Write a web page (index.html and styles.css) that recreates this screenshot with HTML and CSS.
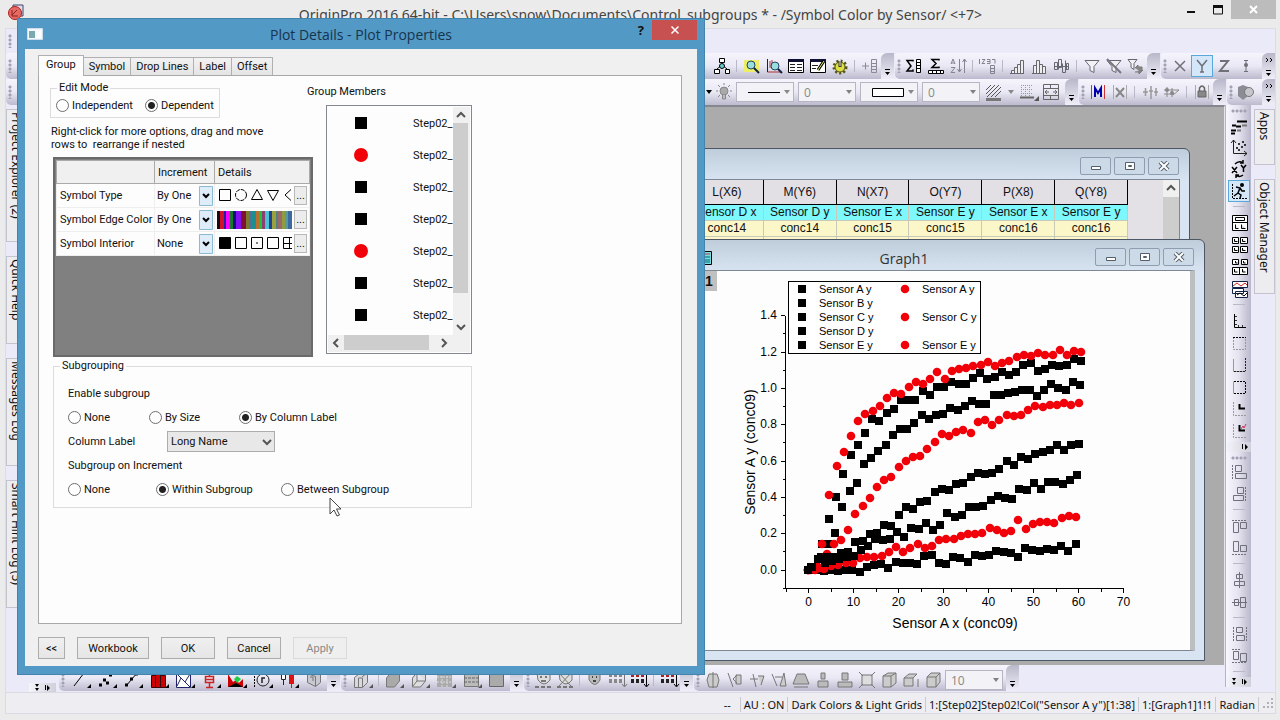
FILE: index.html
```html
<!DOCTYPE html>
<html lang="en">
<head>
    <meta charset="UTF-8">
    <meta name="viewport" content="width=device-width, initial-scale=1.0">
    <title>OriginPro 2016 64-bit</title>
    <link rel="stylesheet" href="styles.css">
</head>
<body>
    <div class="app">
        <header class="app-title">
            <svg class="app-icon" width="18" height="18" viewBox="0 0 18 18"><path d="M6 1h10v11H6z" fill="#dde" stroke="#446"/><circle cx="8" cy="9" r="6.500" fill="#e66a62" stroke="#a22"/><path d="M5 6v6h6M5 11l5-5" fill="none" stroke="#822"/></svg>
            <h1>OriginPro 2016 64-bit - C:\Users\snow\Documents\Control_subgroups * - /Symbol Color by Sensor/ &lt;+7&gt;</h1>
            <div class="app-buttons">
                <button aria-label="Minimize"><svg width="12" height="12"><path d="M2 8h8" stroke="#111" stroke-width="2"/></svg></button>
                <button aria-label="Maximize"><svg width="12" height="12"><path d="M1.500 2v8h9V2" fill="none" stroke="#111"/><path d="M1 2.500h10" stroke="#111" stroke-width="3"/></svg></button>
                <button class="app-close" aria-label="Close"><svg width="10" height="10"><path d="M1 1l7 7M8 1L1 8" stroke="#fff" stroke-width="2"/></svg></button>
            </div>
        </header>

        <div class="app-body">
            <div class="menu-row"><i class="grip"></i></div>

            <div class="tool-row">
                <div class="bar bar-fill">
                    <i class="grip"></i>
                    <span class="fill"></span>
                    <button class="tool" aria-label="Project"><svg viewBox="0 0 22 22"><path d="M8.500 3.500h5v4h-5zM3.500 14.500h5v4h-5zM14.500 14.500h4v4h-4zM11 8v3M6 14l5-4 5 4" fill="#fff" stroke="#000"/><circle cx="11" cy="11" r="2.500" fill="#6cc" stroke="#000"/></svg></button>
                    <i class="sep"></i>
                    <button class="tool" aria-label="Zoom window"><svg viewBox="0 0 22 22"><path d="M3 5h15v12H3z" fill="#ee6"/><circle cx="10" cy="10" r="4" fill="#9dd" stroke="#246"/><path d="M13 13l5 5" stroke="#124" stroke-width="2"/></svg></button>
                    <button class="tool" aria-label="Zoom graph"><svg viewBox="0 0 22 22"><path d="M4.500 4v13H18M7 13V6M9 5v4" fill="none" stroke="#a33"/><path d="M4.500 4v13" stroke="#222"/><circle cx="12" cy="11" r="4" fill="#9dd" stroke="#246"/><path d="M15 14l4 4" stroke="#124" stroke-width="2"/></svg></button>
                    <button class="tool" aria-label="Results log"><svg viewBox="0 0 22 22"><path d="M3.500 4.500h15v13h-15z" fill="#fff" stroke="#000"/><path d="M3 5.500h16" stroke="#113" stroke-width="3"/><path d="M5 9.500h5M12 9.500h5M5 12.500h5M12 12.500h5M5 15.500h5M12 15.500h5" stroke="#222"/></svg></button>
                    <button class="tool" aria-label="Command window"><svg viewBox="0 0 22 22"><path d="M3.500 4.500h15v13h-15z" fill="#fff" stroke="#000"/><path d="M3 5.500h16" stroke="#113" stroke-width="3"/><path d="M5 10.500h6M5 13.500h4" stroke="#222"/><path d="M17 6l-6 9" stroke="#000" stroke-width="3"/><path d="M17 6l-6 9" stroke="#ee6"/></svg></button>
                    <button class="tool" aria-label="Code builder"><svg viewBox="0 0 22 22"><circle cx="11" cy="12" r="6" fill="#dd4" stroke="#552" stroke-width="3" stroke-dasharray="2 2"/><circle cx="11" cy="12" r="5" fill="#dd4" stroke="#552"/><path d="M11 6v6" stroke="#333" stroke-width="3"/><path d="M11 5v6" stroke="#eee"/></svg></button>
                    <i class="sep"></i>
                    <button class="tool" aria-label="Add column"><svg viewBox="0 0 22 22"><path d="M3 11h7M6.500 7.500v7M12.500 4.500h5v13h-5zM12 8.500h6M12 11.500h6M12 14.500h6" fill="none" stroke="#8a8a94"/></svg></button>
                    <span class="more"></span>
                </div>
                <div class="bar">
                    <i class="grip"></i>
                    <button class="tool" aria-label="Column statistics"><svg viewBox="0 0 22 22"><path d="M10 6.500V5.500H4l4 5.500-4 5h6v-1.500" fill="none" stroke="#000" stroke-width="1.500"/><path d="M13.500 4.500h4v13h-4zM13 7.500h5M13 10.500h5M13 13.500h5" fill="#fff" stroke="#000"/></svg></button>
                    <button class="tool" aria-label="Row statistics"><svg viewBox="0 0 22 22"><path d="M14 5.500V4.500H7l4 4-4 4h7v-1" fill="none" stroke="#000" stroke-width="1.500"/><path d="M3.500 15.500h15v3h-15zM7.500 15v4M11.500 15v4M15.500 15v4" fill="#fff" stroke="#000"/></svg></button>
                    <button class="tool" aria-label="Sort"><svg viewBox="0 0 22 22"><path d="M4 9l2-5 2 5M4 8h4M4 12.500h4l-4 5h4M12.500 4v13l-2-3M17.500 18V4l-2 3M17.500 4l2 3M12.500 17l2-3" fill="none" stroke="#85858f"/></svg></button>
                    <i class="sep"></i>
                    <button class="tool" aria-label="Set row numbers"><svg viewBox="0 0 22 22"><path d="M2.500 4v5M5 4.500h3l-3 4h3M10 4.500h3v4h-3M10 6.500h3M15 4.500h3v4M13.500 10.500h4v8h-4zM13 13.500h5M13 16.500h5" fill="none" stroke="#85858f"/></svg></button>
                    <i class="sep"></i>
                    <button class="tool" aria-label="Sorted columns"><svg viewBox="0 0 22 22"><path d="M4.500 18.500v-3h3v3M7.500 18.500v-6h3v6M10.500 18.500v-9h3v9M13.500 18.500v-13h3v13zM3 18.500h14" fill="#eee" stroke="#666670"/></svg></button>
                    <button class="tool" aria-label="Column plot"><svg viewBox="0 0 22 22"><path d="M4.500 18.500v-8h3v8M7.500 18.500v-13h3v13M10.500 18.500v-9h3v9M13.500 18.500v-7h3v7zM3 18.500h14" fill="#eee" stroke="#666670"/></svg></button>
                    <button class="tool" aria-label="Floating columns"><svg viewBox="0 0 22 22"><path d="M3.500 11.500v-4h3v7h-3zM7.500 14.500v-10h3v8h-3M11.500 8.500v9h3v-12M15.500 14.500v-6h2v6h-3M3 11.500h15" fill="none" stroke="#666670"/></svg></button>
                    <i class="sep"></i>
                    <button class="tool" aria-label="Filter"><svg viewBox="0 0 22 22"><path d="M4 5.500h14l-5 6v6l-4-2v-4z" fill="#f2f2f6" stroke="#666670"/></svg></button>
                    <button class="tool" aria-label="Disable filter"><svg viewBox="0 0 22 22"><path d="M4 5.500h14l-5 6v6l-4-2v-4z" fill="#f2f2f6" stroke="#666670"/><path d="M4 4l14 14" stroke="#777780" stroke-width="2"/></svg></button>
                    <button class="tool" aria-label="Reapply filter"><svg viewBox="0 0 22 22"><path d="M3 4.500h9l-3 4v6l-3-2v-4z" fill="#f2f2f6" stroke="#666670"/><path d="M10 13l3-3v2h4v3l-3 1M18 15l-4 4v-2h-4" fill="#888" stroke="#777"/></svg></button>
                    <span class="more"></span>
                </div>
                <div class="bar">
                    <i class="grip"></i>
                    <button class="tool" aria-label="X"><svg viewBox="0 0 22 22"><path d="M6 6l10 10M16 6L6 16" stroke="#707078" stroke-width="1.500"/></svg></button>
                    <button class="tool tool-on" aria-label="Y"><svg viewBox="0 0 22 22"><path d="M6 5l5 6 5-6M11 11v6M9 17h4" fill="none" stroke="#707078" stroke-width="1.500"/></svg></button>
                    <button class="tool" aria-label="Z"><svg viewBox="0 0 22 22"><path d="M7 6h8L7 16h9" fill="none" stroke="#707078" stroke-width="2"/></svg></button>
                    <button class="tool" aria-label="Error bar"><svg viewBox="0 0 22 22"><path d="M9 5.500h4M9 16.500h4M11 5v12" stroke="#707078"/><circle cx="11" cy="10" r="2" fill="#707078"/></svg></button>
                    <span class="more more-wide"></span>
                </div>
            </div>

            <div class="tool-row">
                <div class="bar bar-fill">
                    <i class="grip"></i>
                    <span class="fill"></span>
                    <i class="arrow arrow-dark"></i>
                    <button class="tool" aria-label="Light"><svg viewBox="0 0 22 22"><circle cx="11" cy="10" r="4" fill="#aaa" stroke="#888"/><path d="M9.500 14v4h3v-4M3 10h2M17 10h2M11 2v2M5 4l2 2M17 4l-2 2M5 16l2-2M17 16l-2-2" fill="#bbb" stroke="#888"/></svg></button>
                    <button class="pick" aria-label="Line style"><svg width="34" height="10"><path d="M1 5.500h32" stroke="#000"/></svg><i class="arrow"></i></button>
                    <select class="combo" aria-label="Line width"><option>0</option></select>
                    <button class="pick" aria-label="Border style"><svg width="34" height="11"><path d="M1.500 1.500h31v8h-31z" fill="#fff" stroke="#000"/></svg><i class="arrow"></i></button>
                    <select class="combo" aria-label="Border width"><option>0</option></select>
                    <button class="tool" aria-label="Fill pattern"><svg viewBox="0 0 22 22"><path d="M3 9l5-5M3 13l9-9M4 16l12-12M8 16L18 6M12 16l6-6" stroke="#555"/><path d="M3 17h15v3H3z" fill="#777"/></svg></button>
                    <i class="arrow"></i>
                    <button class="tool" aria-label="Grid"><svg viewBox="0 0 22 22"><path d="M4 4.500h12M4 8.500h12M4 12.500h12M4.500 4v12M8.500 4v12M12.500 4v12" stroke="#999" stroke-dasharray="1 1"/><path d="M3 16.500h14" stroke="#666" stroke-width="2"/><path d="M22 15v5h-5z" fill="#555"/></svg></button>
                    <button class="tool" aria-label="Table"><svg viewBox="0 0 22 22"><path d="M4.500 3.500h15v15h-15zM4 7.500h15M4 14.500h15M11.500 3v4M11.500 15v4M6 11h4M14 11h4M8 9L6 11l2 2M16 9l2 2-2 2" fill="none" stroke="#666"/></svg></button>
                    <span class="more more-gap"></span>
                </div>
                <div class="bar">
                    <i class="grip"></i>
                    <button class="tool" aria-label="Mask"><svg viewBox="0 0 22 22"><path d="M4.500 4v14M17.500 4v14" stroke="#c33"/><path d="M8 16V7l3 5 3-5v9" fill="none" stroke="#00a" stroke-width="2"/></svg></button>
                    <button class="tool" aria-label="Unmask"><svg viewBox="0 0 22 22"><path d="M4.500 4v14M17.500 4v14" stroke="#aaa"/><path d="M7 7l8 9M15 7l-8 9" stroke="#888" stroke-width="2"/></svg></button>
                    <i class="sep"></i>
                    <button class="tool" aria-label="Mask range"><svg viewBox="0 0 22 22"><path d="M4 11h5M6.500 7v8M10 10h4M12 5v13M15 11h4M17 7v8" stroke="#999" stroke-width="1.500"/></svg></button>
                    <button class="tool" aria-label="Swap mask"><svg viewBox="0 0 22 22"><path d="M3 9h15M3 13h10M6 6v10M11 7v9M18 9l-6 5" stroke="#888"/><circle cx="6" cy="9" r="2" fill="#888"/><circle cx="11" cy="12" r="2" fill="#888"/></svg></button>
                    <i class="sep"></i>
                    <button class="tool" aria-label="Lock"><svg viewBox="0 0 22 22"><path d="M4.500 4v14M17.500 4v14" stroke="#aaa"/><path d="M8.500 10V7q2.500-4 5 0v3" fill="none" stroke="#666" stroke-width="1.500"/><path d="M7 10h8v6H7z" fill="#888" stroke="#666"/></svg></button>
                    <span class="more"></span>
                </div>
                <div class="bar">
                    <i class="grip"></i>
                    <button class="tool" aria-label="3D"><svg viewBox="0 0 22 22"><path d="M3 6l5-2 5 2v9l-5 4-5-4z" fill="#8c8c94"/><circle cx="14" cy="11" r="4.500" fill="#c5c5cc" stroke="#777"/></svg></button>
                    <span class="more more-wide"></span>
                </div>
            </div>

            <div class="middle">
                <nav class="dock dock-left">
                    <button class="dock-tab tab-project">Project Explorer (2)</button>
                    <button class="dock-tab tab-help">Quick Help</button>
                    <button class="dock-tab tab-log">Messages Log</button>
                    <button class="dock-tab tab-hint">Smart Hint Log (5)</button>
                </nav>

                <main class="mdi"></main>

                <div class="side">
                    <div class="side-bar">
                        <i class="grip grip-flat"></i>
                        <button class="tool" aria-label="Shift curves"><svg viewBox="0 0 22 22"><path d="M3 16.500h5M8 12.500h5M13 7.500h6M4 11.500h4M9 7.500h4M3 19.500h4" stroke="#000" stroke-width="2"/><path d="M9 16.500h4M14 11.500h5" stroke="#777" stroke-width="2"/></svg></button>
                        <button class="tool" aria-label="Rescale"><svg viewBox="0 0 22 22"><path d="M5.500 4v13.500H19M3 7l2.500-3L8 7M16 15l3 2.500-3 2.500" fill="none" stroke="#222"/><path d="M8 12h2M10 8h2M13 11h2M14 6h2M10 14h2M16 9h2" stroke="#000" stroke-width="1.500"/></svg></button>
                        <button class="tool" aria-label="Exchange X Y"><svg viewBox="0 0 22 22"><path d="M4 9l5 6M9 9l-5 6M13 7l2.500 3L18 7M15.500 10v4M7 6q4-4 8-1M15 2v3h-3M15 17q-4 3-7 0M8 20v-3h3" fill="none" stroke="#000" stroke-width="1.500"/></svg></button>
                        <button class="tool tool-on" aria-label="Speed mode"><svg viewBox="0 0 22 22"><path d="M4.500 4v14.500H19" fill="none" stroke="#000" stroke-dasharray="2 1"/><circle cx="14" cy="5" r="2"/><path d="M8 7l4 1-2 5 3 2-1 3M10 13l-4 3M12 8l2 3h3" fill="none" stroke="#000" stroke-width="1.500"/></svg></button>
                        <i class="sep-h"></i>
                        <button class="tool" aria-label="Extract layers"><svg viewBox="0 0 22 22"><path d="M4.500 3.500h15v15h-15zM4 10.500h15M7.500 5.500h9v3h-9zM7.500 12.500v4h3M13.500 12.500v4h4" fill="#fff" stroke="#000"/></svg></button>
                        <button class="tool" aria-label="Merge graphs"><svg viewBox="0 0 22 22"><path d="M4.500 3.500h6v6h-6zM12.500 3.500h7v6h-7zM4.500 12.500h6v6h-6zM12.500 12.500h7v6h-7zM6.500 5v2.500h3M14.500 5v2.500h3M6.500 14v2.500h3M14.500 14v2.500h3" fill="#fff" stroke="#000"/></svg></button>
                        <button class="tool" aria-label="Merge graphs 2"><svg viewBox="0 0 22 22"><path d="M4.500 3.500h6v5h-6zM13.500 3.500h6v5h-6zM4.500 11.500h15v7h-15zM11.500 11v7M7.500 5v2h2M15.500 5v2h2M6.500 13v3h3M14.500 13v3h3" fill="#fff" stroke="#000"/></svg></button>
                        <button class="tool" aria-label="New legend"><svg viewBox="0 0 22 22"><path d="M4.500 3.500h15v6h-15zM4.500 10.500h11v5h-11zM7.500 13.500h12v6h-12z" fill="#fff" stroke="#124"/><path d="M5 8l4-3 4 3 4-3 2 2" fill="none" stroke="#c22"/><path d="M9 17l3-2 4 3 3-3" fill="none" stroke="#000"/></svg></button>
                        <i class="sep-h"></i>
                        <button class="tool" aria-label="Bottom left axes"><svg viewBox="0 0 22 22"><path d="M6.500 4v13.500H18" fill="none" stroke="#000"/><path d="M7 6.500h2M7 10.500h2M7 14.500h2M10.500 17v-2M14.500 17v-2" stroke="#333"/></svg></button>
                        <button class="tool" aria-label="Top axis"><svg viewBox="0 0 22 22"><path d="M5.500 5v12.500h12V5" fill="none" stroke="#999" stroke-dasharray="2 1"/><path d="M5 5.500h13" stroke="#000" stroke-dasharray="2 1"/></svg></button>
                        <button class="tool" aria-label="Right axis"><svg viewBox="0 0 22 22"><path d="M5.500 5v12.500h12" fill="none" stroke="#999"/><path d="M17.500 4v13M17 17.500H6" stroke="#222" stroke-dasharray="2 1"/></svg></button>
                        <button class="tool" aria-label="Box axes"><svg viewBox="0 0 22 22"><path d="M5.500 17.500v-12" fill="none" stroke="#999"/><path d="M6 5.500h11.500v12H6" fill="none" stroke="#000" stroke-dasharray="2 1"/></svg></button>
                        <button class="tool" aria-label="Inset"><svg viewBox="0 0 22 22"><path d="M5.500 4v13.500H18" fill="none" stroke="#999" stroke-dasharray="2 1"/><path d="M11.500 6v4.500H17" fill="none" stroke="#000" stroke-width="2"/></svg></button>
                        <button class="tool" aria-label="Inset with data"><svg viewBox="0 0 22 22"><path d="M5.500 4v13.500H18" fill="none" stroke="#999" stroke-dasharray="2 1"/><path d="M11.500 5v5.500H17" fill="none" stroke="#000" stroke-width="2"/><path d="M13 9l2-3 1 2 2-4" fill="none" stroke="#c35"/></svg></button>
                        <span class="more-side"></span>
                    </div>
                    <div class="side-bar side-grow">
                        <i class="grip grip-flat"></i>
                        <button class="tool" aria-label="Align left"><svg viewBox="0 0 22 22"><path d="M7.500 4.500h6v6h-6zM7.500 12.500h11v5h-11z" fill="none" stroke="#70707c"/><path d="M4.500 4v14" stroke="#70707c" stroke-dasharray="2 1"/></svg></button>
                        <button class="tool" aria-label="Align right"><svg viewBox="0 0 22 22"><path d="M9.500 4.500h6v6h-6zM5.500 12.500h10v5h-10z" fill="none" stroke="#70707c"/><path d="M17.500 4v14" stroke="#70707c" stroke-dasharray="2 1"/></svg></button>
                        <i class="sep-h"></i>
                        <button class="tool" aria-label="Align top"><svg viewBox="0 0 22 22"><path d="M5.500 7.500h5v10h-5zM12.500 7.500h6v6h-6z" fill="none" stroke="#70707c"/><path d="M4 5.500h14" stroke="#70707c" stroke-dasharray="2 1"/></svg></button>
                        <button class="tool" aria-label="Align bottom"><svg viewBox="0 0 22 22"><path d="M5.500 4.500h5v10h-5zM12.500 8.500h6v6h-6z" fill="none" stroke="#70707c"/><path d="M4 17.500h14" stroke="#70707c" stroke-dasharray="2 1"/></svg></button>
                        <i class="sep-h"></i>
                        <button class="tool" aria-label="Align vertical"><svg viewBox="0 0 22 22"><path d="M8.500 5.500h6v4h-6zM6.500 12.500h10v4h-10zM11.500 3v16" fill="none" stroke="#70707c"/></svg></button>
                        <button class="tool" aria-label="Align horizontal"><svg viewBox="0 0 22 22"><path d="M6.500 8.500h4v6h-4zM12.500 6.500h5v10h-5zM4 11.500h15" fill="none" stroke="#70707c"/></svg></button>
                        <i class="sep-h"></i>
                        <button class="tool" aria-label="Same width"><svg viewBox="0 0 22 22"><path d="M8.500 4.500h6v5h-6zM8.500 12.500h8v5h-8z" fill="none" stroke="#70707c"/><path d="M5.500 4v14M18.500 4v14" stroke="#70707c" stroke-dasharray="2 1"/></svg></button>
                        <button class="tool" aria-label="Same height"><svg viewBox="0 0 22 22"><path d="M5.500 6.500h5v8h-5zM12.500 8.500h6v8h-6z" fill="none" stroke="#70707c"/><path d="M4 4.500h8M4 17.500h15" stroke="#70707c" stroke-dasharray="2 1"/></svg></button>
                        <i class="sep-h"></i>
                        <span class="fill"></span>
                        <span class="more-side more-end"></span>
                    </div>
                </div>

                <nav class="dock dock-right">
                    <button class="dock-tab tab-apps">Apps</button>
                    <button class="dock-tab tab-objects">Object Manager</button>
                </nav>
            </div>

            <div class="tool-row bottom-row">
                <div class="corner"><span class="more-side more-end"></span></div>
                <div class="bar bar-wide">
                    <i class="grip"></i>
                    <button class="tool" aria-label="Line"><svg viewBox="0 0 22 22"><path d="M5 17L15 4" stroke="#000"/><path d="M22 15v4h-4z"/></svg></button>
                    <button class="tool" aria-label="Scatter"><svg viewBox="0 0 22 22"><path d="M4 16h3M8 11h3M11 14h3M14 6h3" stroke="#000" stroke-width="3"/><path d="M22 15v4h-4z"/></svg></button>
                    <button class="tool" aria-label="Line and symbol"><svg viewBox="0 0 22 22"><path d="M5 17L16 4" stroke="#000"/><path d="M4 16h3M9 10h3M14 5h3" stroke="#000" stroke-width="3"/><path d="M22 15v4h-4z"/></svg></button>
                    <button class="tool" aria-label="Column"><svg viewBox="0 0 22 22"><path d="M4.500 18.500v-12h4v-3h5v3h5v12z" fill="#c00" stroke="#400"/><path d="M8.500 6v12M13.500 6v12" stroke="#300"/><path d="M22 15v4h-4z"/></svg></button>
                    <button class="tool" aria-label="Template"><svg viewBox="0 0 22 22"><path d="M3.500 3.500h14v15h-14z" fill="#fff" stroke="#226"/><path d="M4 17l4-8 4 4 5-8M4 5l13 13" fill="none" stroke="#226"/><path d="M22 15v4h-4z"/></svg></button>
                    <button class="tool" aria-label="Box"><svg viewBox="0 0 22 22"><path d="M6.500 7.500h8v6h-8zM6 10.500h8M10.500 3v4M10.500 14v4M7 18.500h7" fill="none" stroke="#c22" stroke-width="1.500"/><path d="M22 15v4h-4z"/></svg></button>
                    <button class="tool" aria-label="Area"><svg viewBox="0 0 22 22"><path d="M3 5v13h15V10l-4 4-3-3-3 2z" fill="#c00"/><path d="M3 18l8-4 7 4z"/><path d="M12 7l4 3-4 4-3-4z" fill="#2c4"/><path d="M22 15v4h-4z"/></svg></button>
                    <button class="tool" aria-label="Polar"><svg viewBox="0 0 22 22"><path d="M3.500 4v14" stroke="#000" stroke-dasharray="2 1"/><circle cx="12" cy="11" r="6" fill="none" stroke="#222"/><path d="M11 14V9h3" fill="none" stroke="#222" stroke-width="1.500"/><path d="M22 15v4h-4z"/></svg></button>
                    <button class="tool" aria-label="Stock"><svg viewBox="0 0 22 22"><path d="M4.500 4.500h4v6h-4zM6.500 10v6" fill="#fff" stroke="#222"/><path d="M12 6h5v9h-5zM14 3h1v16h-1z" fill="#d11"/><path d="M22 15v4h-4z"/></svg></button>
                    <button class="tool" aria-label="Stack"><svg viewBox="0 0 22 22"><path d="M4.500 4.500l8 3v10l-8-4zM7.500 3.500h10v10l-5 4M7 8h3v4" fill="#c8c8d0" stroke="#777"/></svg></button>
                    <span class="more"></span>
                </div>
                <div class="bar bar-wide">
                    <i class="grip"></i>
                    <button class="tool" aria-label="3D bars"><svg viewBox="0 0 22 22"><path d="M3.500 8.500l5-4h8v9l-5 5h-8zM7.500 18V9h4v9M11 8l5-4" fill="#d8d8de" stroke="#777"/><path d="M22 15v4h-4z" fill="#555"/></svg></button>
                    <i class="sep"></i>
                    <button class="tool" aria-label="3D surface"><svg viewBox="0 0 22 22"><path d="M4.500 9l4-5h9v8l-5 6h-8z" fill="#aaa" stroke="#777"/><path d="M22 15v4h-4z" fill="#555"/></svg></button>
                    <button class="tool" aria-label="3D scatter"><svg viewBox="0 0 22 22"><path d="M4.500 9l4-5h9v8l-5 6h-8zM9 4v8h8M9 12l-4 5" fill="#ddd" stroke="#777"/><path d="M22 15v4h-4z" fill="#555"/></svg></button>
                    <button class="tool" aria-label="Contour"><svg viewBox="0 0 22 22"><path d="M3 4h15v14H3z" fill="#aaa"/><path d="M3 8h15M3 13h15M8 4v14M13 4v14" stroke="#ddd" stroke-dasharray="2 1"/><path d="M22 15v4h-4z" fill="#555"/></svg></button>
                    <button class="tool" aria-label="Heatmap"><svg viewBox="0 0 22 22"><path d="M4.500 4.500h14v13h-14z" fill="#bbb" stroke="#777"/><path d="M4 9h15M4 13h15" stroke="#666" stroke-dasharray="3 1"/><path d="M22 15v4h-4z" fill="#555"/></svg></button>
                    <button class="tool" aria-label="Image"><svg viewBox="0 0 22 22"><path d="M3.500 3.500h14v14h-14z" fill="#aaa" stroke="#666"/></svg></button>
                    <span class="more"></span>
                </div>
                <div class="bar">
                    <i class="grip"></i>
                    <button class="tool" aria-label="Add mask"><svg viewBox="0 0 22 22"><path d="M5 4h13v7q-6 8-12 0z" fill="#ddd" stroke="#777"/><path d="M8 8h2M13 8h2M9 12h5M3 18h4M9 18h4M15 18h4" stroke="#777" stroke-width="2"/></svg></button>
                    <button class="tool" aria-label="Remove mask"><svg viewBox="0 0 22 22"><path d="M5 4h13v7q-6 8-12 0z" fill="#ddd" stroke="#777"/><path d="M5 4l12 13M17 4L5 17" stroke="#777"/><path d="M3 18h4M9 18h4M15 18h4" stroke="#777" stroke-width="2"/></svg></button>
                    <i class="sep"></i>
                    <button class="tool" aria-label="Theme"><svg viewBox="0 0 22 22"><path d="M5 4h11v7q-5 9-11 0z" fill="#bbb" stroke="#777"/><path d="M8 8h1M12 8h1M9 12h3" stroke="#444" stroke-width="2"/></svg></button>
                    <button class="tool" aria-label="Move rows"><svg viewBox="0 0 22 22"><path d="M3 6h13M3 12h13" stroke="#888" stroke-width="4" stroke-dasharray="3 2"/><path d="M18.500 4v13M16 15l2.500 3 2.500-3" fill="none" stroke="#777"/></svg></button>
                    <button class="tool" aria-label="Mark rows"><svg viewBox="0 0 22 22"><path d="M3 6h13" stroke="#a22" stroke-width="4" stroke-dasharray="3 2"/><path d="M3 12h13" stroke="#222" stroke-width="4" stroke-dasharray="3 2"/><path d="M18.500 4v13M16 15l2.500 3 2.500-3" fill="none" stroke="#000"/></svg></button>
                    <i class="sep"></i>
                    <button class="tool" aria-label="Mark columns"><svg viewBox="0 0 22 22"><path d="M3 6h13" stroke="#a22" stroke-width="4" stroke-dasharray="3 2"/><path d="M3 12h13" stroke="#222" stroke-width="4" stroke-dasharray="3 2"/><path d="M18.500 4v13M16 15l2.500 3 2.500-3" fill="none" stroke="#000"/></svg></button>
                    <span class="more"></span>
                </div>
                <div class="bar">
                    <i class="grip"></i>
                    <button class="tool" aria-label="Flip"><svg viewBox="0 0 22 22"><path d="M7 5h8l2 6-2 7H7L5 11zM11 3v16" fill="#ccc" stroke="#777"/></svg></button>
                    <button class="tool" aria-label="Rotate left"><svg viewBox="0 0 22 22"><path d="M4 4l5 14M12 6h5v9h-5zM9 10l4-4M9 10l4 4" fill="#ccc" stroke="#777"/></svg></button>
                    <button class="tool" aria-label="Rotate right"><svg viewBox="0 0 22 22"><path d="M7 5l3 13M12 7h6l-3 9M4 10h8" fill="#ccc" stroke="#777"/></svg></button>
                    <button class="tool" aria-label="Skew"><svg viewBox="0 0 22 22"><path d="M4 5l5 12M16 4l-4 13h6zM7 8h7" fill="#ccc" stroke="#777"/></svg></button>
                    <button class="tool" aria-label="Widen"><svg viewBox="0 0 22 22"><path d="M7 5h8l4 10H3zM4 18h14" fill="#bbb" stroke="#777"/></svg></button>
                    <button class="tool" aria-label="Narrow"><svg viewBox="0 0 22 22"><path d="M9 4h4v6h-4zM6 12h10v6H6z" fill="#bbb" stroke="#777"/></svg></button>
                    <button class="tool" aria-label="Raise"><svg viewBox="0 0 22 22"><path d="M8 4h6v7H8zM4 13h14v5H4z" fill="#bbb" stroke="#777"/></svg></button>
                    <button class="tool" aria-label="Fit"><svg viewBox="0 0 22 22"><path d="M6 6h10v10H6zM3 3l4 4M19 3l-4 4M3 19l4-4M19 19l-4-4" fill="#ddd" stroke="#777"/></svg></button>
                    <button class="tool" aria-label="Perspective"><svg viewBox="0 0 22 22"><path d="M5 7l5-3h8v10l-5 4H5zM5 7h8v11M13 7l5-3" fill="#ccc" stroke="#777"/></svg></button>
                    <button class="tool" aria-label="Cube move"><svg viewBox="0 0 22 22"><path d="M4 9h9v8H4zM13 9l4-4H9L4 9M18 10v8" fill="#ccc" stroke="#777"/></svg></button>
                    <button class="tool" aria-label="Cube reset"><svg viewBox="0 0 22 22"><path d="M5 8l4-4h9v9l-4 5H5zM5 8h9v10M14 8l4-4" fill="#ccc" stroke="#777"/></svg></button>
                    <select class="combo" aria-label="Angle"><option>10</option></select>
                    <span class="more"></span>
                </div>
            </div>
        </div>

        <footer class="status">
            <span>--</span>
            <span>AU : ON</span>
            <span>Dark Colors &amp; Light Grids</span>
            <span>1:[Step02]Step02!Col("Sensor A y")[1:38]</span>
            <span>1:[Graph1]1!1</span>
            <span>Radian</span>
            <svg class="resize" width="12" height="12"><path d="M9 0h2v2H9zM9 4h2v2H9zM5 4h2v2H5zM9 8h2v2H9zM5 8h2v2H5zM1 8h2v2H1z" fill="#b0b0b8"/></svg>
        </footer>
    </div>

    <section class="child book">
        <header class="child-title">
            <span class="child-name"></span>
            <div class="child-buttons">
                <button aria-label="Minimize"><svg width="12" height="10"><path d="M1.500 5.500h9v3h-9z" fill="#fff" stroke="#555f6c"/></svg></button>
                <button aria-label="Maximize"><svg width="12" height="10"><path d="M1.500 1.500h9v7h-9zM4.500 4.500h3v1h-3z" fill="#fff" stroke="#555f6c"/></svg></button>
                <button aria-label="Close"><svg width="12" height="10"><path d="M2 1l8 8M10 1L2 9" stroke="#555f6c" stroke-width="4"/><path d="M2 1l8 8M10 1L2 9" stroke="#fff" stroke-width="2"/></svg></button>
            </div>
        </header>
        <div class="child-body sheet">
            <table class="cells">
                <thead>
                    <tr><th>L(X6)</th><th>M(Y6)</th><th>N(X7)</th><th>O(Y7)</th><th>P(X8)</th><th>Q(Y8)</th></tr>
                </thead>
                <tbody>
                    <tr class="long-name"><td>Sensor D x</td><td>Sensor D y</td><td>Sensor E x</td><td>Sensor E y</td><td>Sensor E x</td><td>Sensor E y</td></tr>
                    <tr><td>conc14</td><td>conc14</td><td>conc15</td><td>conc15</td><td>conc16</td><td>conc16</td></tr>
                    <tr><td></td><td></td><td></td><td></td><td></td><td></td></tr>
                </tbody>
            </table>
            <div class="sheet-scroll">
                <svg width="16" height="17"><path d="M4 10l4-4 4 4" fill="none" stroke="#555" stroke-width="2"/></svg>
                <i class="thumb"></i>
            </div>
        </div>
    </section>

    <section class="child graph">
        <header class="child-title">
            <svg class="graph-icon" width="16" height="16"><path d="M1.500 1.500h12v13h-12z" fill="#7dd" stroke="#000"/><path d="M3 4h9" stroke="#c33"/><path d="M3 7h9M3 10h9M3 12h9" stroke="#067"/></svg>
            <h2 class="child-name">Graph1</h2>
            <div class="child-buttons">
                <button aria-label="Minimize"><svg width="12" height="10"><path d="M1.500 5.500h9v3h-9z" fill="#fff" stroke="#555f6c"/></svg></button>
                <button aria-label="Maximize"><svg width="12" height="10"><path d="M1.500 1.500h9v7h-9zM4.500 4.500h3v1h-3z" fill="#fff" stroke="#555f6c"/></svg></button>
                <button aria-label="Close"><svg width="12" height="10"><path d="M2 1l8 8M10 1L2 9" stroke="#555f6c" stroke-width="4"/><path d="M2 1l8 8M10 1L2 9" stroke="#fff" stroke-width="2"/></svg></button>
            </div>
        </header>
        <div class="child-body page">
            <span class="layer">1</span>
            <svg id="chart" class="chart" width="420" height="370" viewBox="0 1 420 370">
                <g id="ticks" stroke="#000"></g>
                <g id="tickLabels" class="tick-text"></g>
                <text x="225" y="358" text-anchor="middle" class="axis-text">Sensor A x (conc09)</text>
                <text transform="translate(25 182) rotate(-90)" text-anchor="middle" class="axis-text">Sensor A y (conc09)</text>
                <g id="markers"></g>
                <rect x="58.500" y="11.500" width="192" height="72" fill="#fff" stroke="#000"/>
                <g id="legend" class="legend-text"></g>
            </svg>
        </div>
    </section>

    <section class="dialog" role="dialog" aria-labelledby="dialogTitle">
        <header class="dialog-title">
            <svg width="16" height="14"><path d="M0.500 1.500h15v11H.5z" fill="#f4f8fa" stroke="#cde"/><path d="M2 4h6v7H2z" fill="#7aa9b0"/><path d="M10 4h4v7h-4z" fill="#fff"/></svg>
            <h2 id="dialogTitle">Plot Details - Plot Properties</h2>
            <button class="dialog-help" aria-label="Help">?</button>
            <button class="dialog-close" aria-label="Close"><svg width="10" height="10"><path d="M1.500 1.500l7 7M8.500 1.500l-7 7" stroke="#fff" stroke-width="1.500"/></svg></button>
        </header>
        <div class="dialog-body">
            <div class="tabs" role="tablist">
                <button class="tab tab-active" role="tab">Group</button>
                <button class="tab" role="tab">Symbol</button>
                <button class="tab" role="tab">Drop Lines</button>
                <button class="tab" role="tab">Label</button>
                <button class="tab" role="tab">Offset</button>
            </div>
            <form class="tab-page">
                <div class="group-grid">
                    <div class="mode">
                        <fieldset class="mode-box">
                            <legend>Edit Mode</legend>
                            <label><input type="radio" name="mode"> Independent</label>
                            <label><input type="radio" name="mode" checked> Dependent</label>
                        </fieldset>
                        <p>Right-click for more options, drag and move<br>rows to &nbsp;rearrange if nested</p>
                    </div>
                    <span class="members-label">Group Members</span>

                    <div class="increments">
                        <table>
                            <thead>
                                <tr><th class="col-name"></th><th class="col-inc">Increment</th><th>Details</th></tr>
                            </thead>
                            <tbody>
                                <tr>
                                    <td>Symbol Type</td>
                                    <td><select class="inc" aria-label="Symbol Type increment"><option>By One</option></select></td>
                                    <td><div class="details"><svg width="75" height="18" fill="none" stroke="#000"><path d="M2.500 2.500h11v11h-11zM45.500 12.500h-11L40 2.500zM50.500 3.500h11L56 13.500zM74 2.500l-6 5.500 6 5.500"/><circle cx="24" cy="8" r="5.500" stroke-dasharray="4 1"/></svg><button type="button">...</button></div></td>
                                </tr>
                                <tr>
                                    <td>Symbol Edge Color</td>
                                    <td><select class="inc" aria-label="Symbol Edge Color increment"><option>By One</option></select></td>
                                    <td><div class="details"><span class="palette"></span><button type="button">...</button></div></td>
                                </tr>
                                <tr>
                                    <td>Symbol Interior</td>
                                    <td><select class="inc" aria-label="Symbol Interior increment"><option>None</option></select></td>
                                    <td><div class="details"><svg width="75" height="18" fill="none" stroke="#000"><path d="M2.500 2.500h11v11h-11z" fill="#000"/><path d="M18.500 2.500h11v11h-11zM34.500 2.500h11v11h-11zM39 8h2M50.500 2.500h11v11h-11zM75 2.500h-8.500v11H75M66 8.500h9M72.500 2v12"/></svg><button type="button">...</button></div></td>
                                </tr>
                            </tbody>
                        </table>
                    </div>

                    <div class="members">
                        <ul>
                            <li><i class="square"></i>Step02_</li>
                            <li><i class="dot"></i>Step02_</li>
                            <li><i class="square"></i>Step02_</li>
                            <li><i class="square"></i>Step02_</li>
                            <li><i class="dot"></i>Step02_</li>
                            <li><i class="square"></i>Step02_</li>
                            <li><i class="square"></i>Step02_</li>
                        </ul>
                        <div class="scroll-v">
                            <svg width="16" height="16"><path d="M4 10l4-4 4 4" fill="none" stroke="#555" stroke-width="2"/></svg>
                            <i class="thumb"></i>
                            <svg width="16" height="16"><path d="M4 6l4 4 4-4" fill="none" stroke="#555" stroke-width="2"/></svg>
                        </div>
                        <div class="scroll-h">
                            <svg width="16" height="16"><path d="M10 4L6 8l4 4" fill="none" stroke="#555" stroke-width="2"/></svg>
                            <i class="thumb"></i>
                            <svg width="16" height="16"><path d="M6 4l4 4-4 4" fill="none" stroke="#555" stroke-width="2"/></svg>
                        </div>
                    </div>
                </div>

                <fieldset class="subgroup">
                    <legend>Subgrouping</legend>
                    <div class="sub-row">Enable subgroup</div>
                    <div class="sub-row sub-enable">
                        <label><input type="radio" name="enable"> None</label>
                        <label><input type="radio" name="enable"> By Size</label>
                        <label><input type="radio" name="enable" checked> By Column Label</label>
                    </div>
                    <div class="sub-row sub-label">
                        <label for="columnLabel">Column Label</label>
                        <select id="columnLabel"><option>Long Name</option></select>
                    </div>
                    <div class="sub-row">Subgroup on Increment</div>
                    <div class="sub-row sub-increment">
                        <label><input type="radio" name="increment"> None</label>
                        <label><input type="radio" name="increment" checked> Within Subgroup</label>
                        <label><input type="radio" name="increment"> Between Subgroup</label>
                    </div>
                </fieldset>
            </form>
            <div class="actions">
                <button class="narrow">&lt;&lt;</button>
                <button class="wide">Workbook</button>
                <button>OK</button>
                <button>Cancel</button>
                <button disabled>Apply</button>
            </div>
        </div>
    </section>

    <svg class="cursor" width="16" height="22"><path d="M1 1v16l4-4 3 6 2.500-1-3-6H12z" fill="#fff" stroke="#444"/></svg>

    <script src="chart.js"></script>
</body>
</html>
```
FILE: styles.css
```css
* {
    box-sizing: border-box;
}
body {
    margin: 0;
    height: 100vh;
    overflow: hidden;
    background: #ebebeb;
    font-family: "Liberation Sans", Arial, sans-serif;
    font-size: 11px;
    color: #111;
}
button, select, input {
    font: inherit;
    color: inherit;
    margin: 0;
}
button {
    padding: 0;
    border: 0;
    background: none;
}
h1, h2, p, ul {
    margin: 0;
    padding: 0;
    font-weight: normal;
}
svg {
    display: block;
    flex: none;
}

/* main window */
.app {
    height: 100vh;
    padding: 0 4px 6px 5px;
    display: flex;
    flex-direction: column;
}
.app-title {
    height: 28px;
    display: flex;
    justify-content: center;
    align-items: center;
    position: relative;
}
.app-title h1 {
    font: 14px "Noto Sans", sans-serif;
    color: #444;
    white-space: nowrap;
}
.app-icon {
    position: absolute;
    left: 2px;
    top: 4px;
}
.app-buttons {
    position: absolute;
    right: 0;
    top: 0;
    display: flex;
}
.app-buttons button {
    width: 27px;
    height: 19px;
    display: flex;
    justify-content: center;
    align-items: center;
}
.app-buttons .app-close {
    width: 45px;
    background: #bcbcbc;
}
.app-body {
    flex: 1;
    min-height: 0;
    display: flex;
    flex-direction: column;
    background: #ebeaf8;
    border: solid #dcdce4;
    border-width: 1px 1px 0;
}
.menu-row {
    height: 24px;
    display: flex;
    align-items: center;
}

/* toolbars */
.tool-row {
    height: 26px;
    display: flex;
}
.bar {
    display: flex;
    align-items: center;
    margin-right: 1px;
    border-radius: 3px 0 0 5px;
    background: linear-gradient(#f6f5fd, #e9e8f4 50%, #bcbacd);
}
.bar:last-child {
    margin-right: 0;
}
.bar-fill {
    flex: 1;
}
.fill {
    flex: 1;
}
.grip {
    flex: none;
    width: 8px;
    height: 14px;
    background: radial-gradient(circle at 4px 2px, #a2a2b4 1px, transparent 2px) 0 0 / 8px 4px;
}
.grip-flat {
    width: 16px;
    height: 6px;
    background: radial-gradient(circle at 2px 3px, #a2a2b4 1px, transparent 2px) 0 0 / 4px 6px;
}
.tool {
    flex: none;
    width: 22px;
    height: 22px;
}
.tool svg {
    width: 22px;
    height: 22px;
}
.tool-on {
    background: #d3e7f8;
    outline: 1px solid #5aa7dc;
    outline-offset: -1px;
}
.sep {
    flex: none;
    width: 8px;
    height: 12px;
    background: linear-gradient(90deg, transparent 3px, #b8b8c8 3px, #b8b8c8 4px, transparent 4px);
}
.sep-h {
    flex: none;
    width: 12px;
    height: 10px;
    background: linear-gradient(transparent 4px, #b8b8c8 4px, #b8b8c8 5px, transparent 5px);
}
.more {
    align-self: stretch;
    width: 13px;
    border-radius: 6px 0 0 0;
    background:
        url('data:image/svg+xml,<svg xmlns="http://www.w3.org/2000/svg" width="8" height="7"><path d="M1 0h5v1H1zM1 3h5L3.500 6z"/></svg>') 3px 16px no-repeat,
        linear-gradient(#b9b8ca, #efeef8);
}
.more-gap {
    margin-left: 4px;
}
.more-wide {
    margin-left: 5px;
    background:
        url('data:image/svg+xml,<svg xmlns="http://www.w3.org/2000/svg" width="9" height="20"><path d="M1 1l2 2-2 2M5 1l2 2-2 2" fill="none" stroke="black"/><path d="M1 13h5v1H1zM1 16h5L3.500 19z"/></svg>') 3px 4px no-repeat,
        linear-gradient(#b9b8ca, #efeef8);
}
.more-side {
    flex: none;
    align-self: stretch;
    height: 10px;
    background:
        url('data:image/svg+xml,<svg xmlns="http://www.w3.org/2000/svg" width="8" height="8"><path d="M0 1h1v5H0zM3 1v6l3-3z"/></svg>') 16px 1px no-repeat,
        linear-gradient(90deg, #f4f4fa, #d0d0dc);
}
.more-end {
    background:
        url('data:image/svg+xml,<svg xmlns="http://www.w3.org/2000/svg" width="18" height="8"><path d="M1 0h4L3 3zM1 4h4L3 7zM11 1h1v5h-1zM13 1v6l3-3z"/></svg>') 5px 1px no-repeat,
        linear-gradient(90deg, #f4f4fa, #d0d0dc);
}
.arrow {
    flex: none;
    border: 3px solid transparent;
    border-top: 4px solid #888;
    border-bottom: 0;
    margin: 0 3px;
}
.arrow-dark {
    border-top-color: #000;
    margin: 0 1px;
}
.pick, .combo {
    flex: none;
    width: 58px;
    height: 20px;
    margin-left: 1px;
    margin-right: 3px;
    border: 1px solid #b6b6c2;
    background-color: #f3f3f7;
}
.pick {
    display: flex;
    align-items: center;
    justify-content: flex-end;
}
.combo {
    appearance: none;
    padding: 0 0 0 5px;
    font: 12px "Open Sans", sans-serif;
    color: #888;
    background: #f3f3f7 url('data:image/svg+xml,<svg xmlns="http://www.w3.org/2000/svg" width="6" height="4"><path d="M0 0h6L3 4z" fill="gray"/></svg>') 47px 7px no-repeat;
}

/* docks and workspace */
.middle {
    flex: 1;
    min-height: 0;
    display: flex;
}
.dock {
    width: 24px;
    padding-top: 4px;
    display: flex;
    flex-direction: column;
    gap: 14px;
}
.dock-right {
    padding-left: 3px;
}
.dock-tab {
    width: 21px;
    writing-mode: vertical-rl;
    text-align: left;
    padding: 2px 0;
    border: 1px solid #c4c4d0;
    background: #ededf0;
    font: 12px "Noto Sans", sans-serif;
    white-space: nowrap;
}
.tab-project {
    height: 133px;
}
.tab-help {
    height: 88px;
}
.tab-log {
    height: 108px;
}
.tab-hint {
    height: 128px;
}
.tab-apps {
    height: 56px;
}
.tab-objects {
    height: 115px;
}
.mdi {
    flex: 1;
    background: #ababab;
    border-top: 2px solid #868690;
    border-right: 1px solid #e4e4ec;
}
.side {
    width: 26px;
    display: flex;
    flex-direction: column;
}
.side-bar {
    display: flex;
    flex-direction: column;
    align-items: center;
    padding-top: 3px;
    border-left: 1px solid #b4b4c0;
    background: linear-gradient(90deg, #f8f7fe, #e4e3ef 50%, #b9b7ca);
}
.side-grow {
    flex: 1;
}
.bottom-row {
    height: 27px;
}
.bottom-row .bar {
    height: 26px;
    padding-top: 4px;
}
.bottom-row .more {
    margin-top: -4px;
}
.corner {
    width: 50px;
    margin-right: 3px;
    padding: 18px 0 0 23px;
    display: flex;
    flex-direction: column;
}
.bar-wide .tool {
    width: 26px;
    padding-left: 2px;
}
.bar-wide .sep {
    width: 5px;
}
.status {
    height: 22px;
    display: flex;
    justify-content: flex-end;
    align-items: center;
    padding-top: 2px;
    background: #ededf2;
    border: 1px solid #dadae2;
    font: 11px "Noto Sans", sans-serif;
    white-space: nowrap;
}
.status span {
    padding: 0 3px;
    border-right: 1px solid #c8c8d0;
}
.status span:first-child {
    padding-right: 9px;
}
.status .resize {
    margin-left: 3px;
    margin-right: 1px;
}

/* child windows */
.child {
    position: absolute;
    display: flex;
    flex-direction: column;
    padding: 0 9px 9px;
    border: 1px solid #4c5664;
    border-radius: 6px 6px 0 0;
    background: linear-gradient(#bfcddb, #d8e4f1 32px);
}
.book {
    left: 620px;
    top: 148px;
    width: 570px;
    height: 500px;
}
.graph {
    left: 603px;
    top: 239px;
    width: 602px;
    height: 422px;
}
.child-title {
    height: 30px;
    padding-top: 6px;
    display: flex;
    align-items: center;
    position: relative;
}
.child-name {
    flex: 1;
    text-align: center;
    font: 14px "Open Sans", sans-serif;
    color: #333;
}
.child-buttons {
    position: absolute;
    right: 1px;
    top: 8px;
    display: flex;
    gap: 3px;
}
.child-buttons button {
    width: 31px;
    height: 18px;
    display: flex;
    justify-content: center;
    align-items: center;
    border: 1px solid #8e9db0;
    border-radius: 2px;
    background: #ccd9e7;
}
.graph-icon {
    position: absolute;
    left: 85px;
    top: 10px;
}
.child-body {
    flex: 1;
    border: 1px solid #7d8894;
    overflow: hidden;
}
.sheet {
    display: flex;
    justify-content: flex-end;
    background: #e3e0e6;
}
.cells {
    flex: none;
    align-self: flex-start;
    width: 438px;
    margin-right: 35px;
    table-layout: fixed;
    border-collapse: collapse;
    font-size: 12px;
    text-align: center;
    white-space: nowrap;
}
.cells th {
    height: 24px;
    padding: 0;
    font-weight: normal;
    border: solid #000;
    border-width: 0 1px 1px;
    background: #e2dfe5;
}
.cells td {
    height: 16px;
    padding: 0;
    line-height: 14px;
    border: 1px solid #c9c9b8;
    background: #fbf7c8;
}
.cells .long-name td {
    background: #7df8fc;
}
.sheet-scroll {
    width: 16px;
    background: #f0f0f0;
    display: flex;
    flex-direction: column;
}
.thumb {
    background: #cdcdcd;
}
.sheet-scroll .thumb {
    flex: 1;
}
.page {
    display: flex;
    justify-content: flex-end;
    border-right: 5px solid #bcbfc2;
    background: #fdfdfd;
}
.layer {
    width: 16px;
    height: 20px;
    margin-right: 13px;
    background: #c0c0c0;
    font-size: 14px;
    font-weight: bold;
    line-height: 20px;
    text-align: center;
}
.chart {
    margin-right: 40px;
}
.tick-text {
    font-size: 12px;
}
.axis-text {
    font-size: 14px;
}
.legend-text {
    font-size: 11px;
}

/* plot details dialog */
.dialog {
    position: absolute;
    left: 17px;
    top: 18px;
    width: 688px;
    height: 657px;
    padding: 0 7px 8px;
    display: flex;
    flex-direction: column;
    background: #5299c5;
    border: 1px solid #4484ac;
    font-family: Roboto, "Liberation Sans", sans-serif;
}
.dialog-title {
    height: 30px;
    padding-left: 2px;
    display: flex;
    align-items: center;
    position: relative;
}
.dialog-title h2 {
    flex: 1;
    margin-right: 18px;
    text-align: center;
    font: 14px "Open Sans", sans-serif;
    color: #16344e;
}
.dialog-help {
    position: absolute;
    right: 53px;
    top: 2px;
    font: bold 13px "Open Sans", sans-serif;
}
.dialog-close {
    position: absolute;
    right: 0;
    top: 1px;
    width: 45px;
    height: 20px;
    display: flex;
    justify-content: center;
    align-items: center;
    background: #c75050;
}
.dialog-body {
    flex: 1;
    padding: 6px 15px 7px 13px;
    display: flex;
    flex-direction: column;
    background: #f0f0f0;
}
.tabs {
    display: flex;
    align-items: flex-end;
    height: 20px;
}
.tab {
    height: 18px;
    padding: 0 5px;
    border: 1px solid #b0b0b0;
    border-left-width: 0;
    border-bottom: 0;
    background: linear-gradient(#f2f2f2, #e4e4e4);
}
.tab-active {
    height: 21px;
    padding: 0 7px 3px;
    border-left-width: 1px;
    margin-bottom: -1px;
    background: #fdfdfd;
    z-index: 1;
}
.tab-page {
    flex: 1;
    padding: 5px 0 0 11px;
    border: 1px solid #a8a8a8;
    background: #fdfdfd;
}
.group-grid {
    display: grid;
    grid-template-columns: 257px 6px 13px 146px;
    grid-template-rows: 24px 52px 200px;
}
.mode {
    grid-row: 1 / 3;
}
.mode p {
    margin-top: 7px;
    padding-left: 1px;
    line-height: 13px;
}
fieldset {
    margin: 0;
    padding: 0;
    border: 1px solid #dcdcdc;
}
legend {
    line-height: 14px;
    padding: 0 2px;
}
label {
    display: flex;
    align-items: center;
    gap: 3px;
    white-space: nowrap;
}
input[type="radio"] {
    appearance: none;
    flex: none;
    width: 13px;
    height: 13px;
    border: 1px solid #6e6e6e;
    border-radius: 50%;
    background: #fff;
}
input[type="radio"]:checked {
    background: radial-gradient(circle, #222 3px, #fff 4px);
}
.mode-box {
    width: 170px;
    height: 37px;
    display: flex;
    gap: 12px;
    padding: 4px 0 0 5px;
}
.mode-box legend {
    margin-left: 1px;
    margin-right: auto;
}
.mode-box label {
    height: 13px;
}
.members-label {
    grid-column: 2 / 5;
    grid-row: 1;
    padding-top: 4px;
}
.increments {
    grid-column: 1 / 3;
    grid-row: 3;
    margin-left: 3px;
    padding: 1px;
    border: 2px solid #6a6a6a;
    background: #808080;
}
.increments table {
    width: 100%;
    table-layout: fixed;
    border-collapse: collapse;
    background: #fdfdfd;
}
.increments th {
    height: 23px;
    padding: 0 3px;
    text-align: left;
    font-weight: normal;
    background: #f0f0f0;
    border: 1px solid #aaa;
}
.increments .col-name {
    width: 98px;
}
.increments .col-inc {
    width: 60px;
}
.increments td {
    height: 24px;
    padding: 0 0 0 3px;
    white-space: nowrap;
    border: 1px solid #eee;
}
.increments td + td {
    padding: 0 0 0 2px;
}
.inc {
    appearance: none;
    width: 57px;
    height: 20px;
    padding: 0;
    border: 0;
    background:
        url('data:image/svg+xml,<svg xmlns="http://www.w3.org/2000/svg" width="15" height="20"><path d="M.5 .5h13v19H.5z" fill="%23deedf9" stroke="%238bbad2"/><path d="M4 8l3 3 3-3" fill="none" stroke="black" stroke-width="2"/></svg>') right 0 no-repeat;
}
.details {
    display: flex;
    align-items: center;
    gap: 2px;
}
.details button {
    width: 13px;
    height: 19px;
    border: 1px solid #b8b8b8;
    background: #ececec;
}
.palette {
    width: 75px;
    height: 18px;
    background: linear-gradient(90deg, #111 3px, #d0122a 3px 7px, #2020a0 7px 9px, #f0f 9px 13px, #157a30 13px 16px, #101080 16px 19px, #8010f0 19px 24px, #801030 24px 29px, #7a7a30 29px 32px, #5070a0 32px 35px, #1a9090 35px 39px, #b87030 39px 42px, #20c040 42px 45px, #8a4070 45px 48px, #50c0d8 48px 52px, #204090 52px 55px, #9aa040 55px 59px, #508080 59px 61px, #9a6a68 61px 65px, #909a40 65px 68px, #5a9a98 68px 71px, #3a6aa0 71px);
}
.members {
    grid-column: 4;
    grid-row: 2 / 4;
    height: 249px;
    padding: 1px;
    display: grid;
    grid-template-columns: 1fr 17px;
    grid-template-rows: 1fr 17px;
    border: 1px solid #828790;
    background: #fdfdfd;
}
.members ul {
    list-style: none;
    padding-left: 27px;
    overflow: hidden;
}
.members li {
    height: 32px;
    display: flex;
    align-items: center;
}
.square {
    flex: none;
    width: 12px;
    height: 12px;
    margin-right: 46px;
    background: #000;
}
.dot {
    flex: none;
    width: 14px;
    height: 14px;
    margin: 0 45px 0 -1px;
    border-radius: 50%;
    background: #f2000a;
}
.scroll-v {
    display: flex;
    flex-direction: column;
    background: #f0f0f0;
}
.scroll-v .thumb {
    height: 170px;
    margin-right: 2px;
    margin-bottom: auto;
}
.scroll-h {
    grid-column: 1 / 3;
    display: flex;
    padding-right: 18px;
    background: #f0f0f0;
}
.scroll-h .thumb {
    width: 85px;
    height: 15px;
    margin-right: auto;
}
.subgroup {
    width: 419px;
    height: 149px;
    margin-left: 3px;
    margin-top: 2px;
    padding: 8px 0 0 14px;
}
.subgroup legend {
    margin-left: -8px;
}
.sub-row {
    height: 24px;
    display: flex;
    align-items: center;
}
.sub-enable label:nth-child(1) {
    width: 81px;
}
.sub-enable label:nth-child(2) {
    width: 90px;
}
.sub-label label {
    width: 99px;
}
.sub-label select {
    appearance: none;
    width: 108px;
    height: 21px;
    padding: 0 3px;
    border: 1px solid #acacac;
    background: #e8e8e8 url('data:image/svg+xml,<svg xmlns="http://www.w3.org/2000/svg" width="10" height="8"><path d="M1 2l4 4 4-4" fill="none" stroke="%23555" stroke-width="2"/></svg>') 94px 6px no-repeat;
}
.sub-increment label:nth-child(1) {
    width: 88px;
}
.sub-increment label:nth-child(2) {
    width: 125px;
}
.actions {
    display: flex;
    gap: 12px;
    margin-top: 13px;
}
.actions button {
    width: 54px;
    height: 22px;
    border: 1px solid #acacac;
    background: linear-gradient(#f0f0f0, #e6e6e6);
}
.actions .narrow {
    width: 27px;
}
.actions .wide {
    width: 72px;
}
.actions button:disabled {
    color: #888;
    border-color: #dadada;
    background: #efefef;
}
.cursor {
    position: absolute;
    left: 329px;
    top: 497px;
}
```
FILE: chart.js
```js
// curve points are stored at three units per pixel, right-most point last
const STEP = 21.6;
const ORIGIN = 235;

const series = [
    { end: 1053, shape: 'square', y: [901,895,822,746,681,613,555,525,488,446,452,429,417,390,390,390,363,375,350,350,335,342,341,323,310,326,320,306,316,305,284,280,303,296,286,288,284,268,272] },
    { end: 1050, shape: 'square', y: [901,898,860,823,790,710,662,638,582,563,543,524,494,478,478,458,434,446,434,433,413,419,409,392,402,402,375,376,369,366,361,360,378,360,341,354,361,336,345] },
    { end: 1037, shape: 'square', y: [901,901,901,903,901,903,901,901,906,891,884,883,894,875,878,879,881,857,854,878,881,861,864,876,856,858,855,842,847,850,860,834,840,842,836,840,829,842,821] },
    { end: 1054, shape: 'circle', y: [901,900,822,674,587,546,497,452,433,423,407,384,370,372,350,336,342,327,307,327,304,296,294,288,284,277,287,279,274,262,256,257,249,256,256,240,256,243,245] },
    { end: 1046, shape: 'circle', y: [901,898,893,853,822,810,780,731,709,683,651,630,620,592,573,560,557,537,516,491,497,485,480,490,457,450,465,450,436,437,435,421,407,412,404,404,400,404,398] },
    { end: 1038, shape: 'circle', y: [901,900,888,896,888,884,878,880,865,860,860,857,845,832,846,833,822,833,828,811,807,807,799,792,793,788,774,781,790,784,750,777,761,756,757,759,745,738,742] },
    { end: 1046, shape: 'square', y: [901,890,866,860,862,850,845,815,813,792,790,765,768,735,711,716,697,692,665,656,660,641,638,620,608,611,609,597,573,585,561,567,552,546,540,524,540,526,522] },
    { end: 1041, shape: 'square', y: [901,890,868,880,872,866,860,858,840,828,808,810,806,785,800,773,776,758,779,765,728,740,735,711,711,708,690,678,684,688,657,661,640,657,637,636,641,630,615] }
];

function marker(shape, x, y) {
    if (shape === 'circle') {
        return `<circle cx="${x}" cy="${y}" r="4.3" fill="#f2000a"/>`;
    }
    return `<rect x="${x - 4}" y="${y - 4}" width="8" height="8"/>`;
}

let markers = '';
series.forEach(s => {
    s.y.forEach((y, i) => {
        const x = Math.max(ORIGIN, s.end - STEP * (s.y.length - 1 - i));
        markers += marker(s.shape, Math.round(x / 3), Math.round(y / 3));
    });
});
document.getElementById('markers').innerHTML = markers;

// axes
let ticks = '<path d="M55.5 46v273M55 318.5h339" fill="none"/>';
let labels = '';
for (let i = 0; i <= 7; i++) {
    const x = 78.5 + i * 45;
    const y = 300.5 - i * 36.3;
    ticks += `<path d="M${Math.round(x) - 0.5} 319v4"/><path d="M51 ${Math.round(y) - 0.5}h4"/>`;
    ticks += `<path d="M${Math.round(x - 22) - 0.5} 319v3"/><path d="M53 ${Math.round(y + 18) - 0.5}h2"/>`;
    labels += `<text x="${x}" y="336" text-anchor="middle">${i * 10}</text>`;
    labels += `<text x="47" y="${y + 3}" text-anchor="end">${(i * 0.2).toFixed(1)}</text>`;
}
document.getElementById('ticks').innerHTML = ticks;
document.getElementById('tickLabels').innerHTML = labels;

// legend
let legend = '';
['A', 'B', 'C', 'D', 'E'].forEach((name, i) => {
    const y = 19 + i * 14;
    legend += marker('square', 72, y) + `<text x="89" y="${y + 4}">Sensor ${name} y</text>`;
    if (i % 2 === 0) {
        legend += marker('circle', 175, y) + `<text x="192" y="${y + 4}">Sensor ${name} y</text>`;
    }
});
document.getElementById('legend').innerHTML = legend;
```
